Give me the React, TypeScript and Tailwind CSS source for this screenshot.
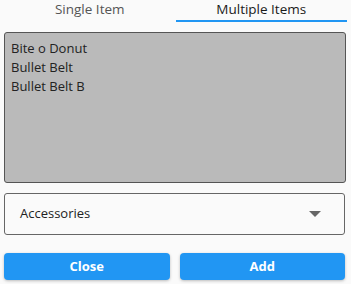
import { useState } from "react";

const items = ["Bite o Donut", "Bullet Belt", "Bullet Belt B"];

const App = () => {
  const [tab, setTab] = useState(1);

  return (
    <div
      className="w-[351px] h-[284px] bg-[#fafafa] px-[4px] flex flex-col"
      style={{ fontFamily: '"Open Sans", "Noto Sans", sans-serif' }}
    >
      <div className="flex h-[22px]">
        {["Single Item", "Multiple Items"].map((label, i) => (
          <button
            key={label}
            onClick={() => setTab(i)}
            className={
              i === tab
                ? "flex-1 text-[13.5px] leading-[18px] pb-[2px] text-[#1a1a1a] font-medium border-b-2 border-[#2196f3]"
                : "flex-1 text-[13.5px] leading-[18px] pb-[2px] text-[#555] border-b-2 border-transparent"
            }
          >
            {label}
          </button>
        ))}
      </div>

      <div className="mt-[10px] h-[151px] w-[342px] bg-[#bababa] border border-[#555] rounded-[3px] pt-[6px] pl-[6px] text-[13px] leading-[19px] text-[#222]">
        {items.map((item) => (
          <div key={item}>{item}</div>
        ))}
      </div>

      <div className="mt-[10px] h-[42px] w-[341px] border border-[#666] rounded-[3px] flex items-center justify-between pl-[15px] pr-[23px] text-[13px] text-[#222]">
        <span>Accessories</span>
        <svg width="12" height="6" viewBox="0 0 12 6">
          <path d="M0 0 L12 0 L6 6 Z" fill="#666" />
        </svg>
      </div>

      <div className="mt-[18px] flex gap-[10px] w-[341px]">
        <button className="flex-1 h-[27px] rounded-[4px] bg-[#2196f3] text-white text-[13px] font-bold shadow-[0_1px_3px_rgba(0,0,0,0.25)]">
          Close
        </button>
        <button className="flex-1 h-[27px] rounded-[4px] bg-[#2196f3] text-white text-[13px] font-bold shadow-[0_1px_3px_rgba(0,0,0,0.25)]">
          Add
        </button>
      </div>
    </div>
  );
};

export default App;
